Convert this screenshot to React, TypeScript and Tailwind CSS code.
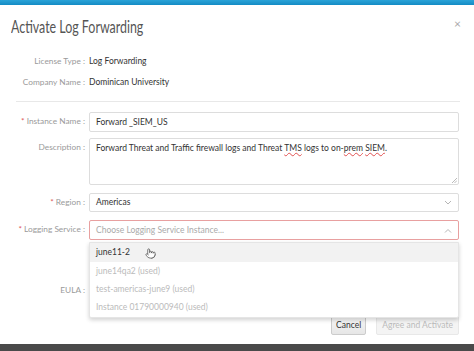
import { Pointer } from "lucide-react";

const font = { fontFamily: "Lato, 'Open Sans', sans-serif" };

function Label({ text, required }: { text: string; required?: boolean }) {
  return (
    <div className="w-[85px] shrink-0 pr-[4px] text-right text-[8.3px] text-[#9a9a9a] leading-[19px] whitespace-nowrap">
      {required && <span className="text-[#e06060] mr-[2px]">*</span>}
      {text} :
    </div>
  );
}

function Chevron({ up }: { up?: boolean }) {
  return (
    <svg width="8" height="5" viewBox="0 0 8 5" className="text-[#b5b5b5]">
      <path d={up ? "M1 4.5 L4 1.5 L7 4.5" : "M1 1 L4 4 L7 1"} fill="none" stroke="currentColor" strokeWidth="1" />
    </svg>
  );
}

export default function App() {
  return (
    <div className="w-[474px] h-[351px] flex flex-col overflow-hidden bg-white" style={font}>
      <div className="h-[5px] shrink-0 bg-gradient-to-b from-[#2aa3d8] to-[#138bc4]" />

      <div className="relative flex-1 flex flex-col pl-[4px] pr-[15px]">
        {/* Header */}
        <div className="flex items-start justify-between mt-[12px]">
          <h1 className="pl-[7px] text-[17px] leading-[20px] text-[#555]">
            <span className="inline-block origin-left scale-x-[0.73] whitespace-nowrap">Activate Log Forwarding</span>
          </h1>
          <span className="mt-[1px] mr-[-2px] text-[12px] leading-[12px] text-[#aaa]">×</span>
        </div>

        <div className="mt-[14px] flex h-[21px] items-center">
          <Label text="License Type" />
          <span className="text-[8.5px] text-[#333]">Log Forwarding</span>
        </div>
        <div className="flex h-[21px] items-center">
          <Label text="Company Name" />
          <span className="text-[8.5px] text-[#333]">Dominican University</span>
        </div>

        <div className="mt-[8px] ml-[12px] mr-[-1px] h-px bg-[#e8e8e8]" />

        {/* Form */}
        <div className="mt-[10px] flex">
          <Label text="Instance Name" required />
          <div className="flex-1 h-[20px] border border-[#ddd] rounded-[2px] px-[6px] text-[8.5px] leading-[18px] text-[#333]">
            Forward _SIEM_US
          </div>
        </div>
        <div className="mt-[6px] flex">
          <Label text="Description" />
          <div className="relative flex-1 h-[47px] border border-[#ddd] rounded-[2px] px-[6px] pt-[1px] text-[8.5px] leading-[16px] text-[#333]">
            Forward Threat and Traffic firewall logs and Threat{" "}
            <span className="underline decoration-wavy decoration-[#e05050] decoration-[1px]">TMS</span> logs to on-
            <span className="underline decoration-wavy decoration-[#e05050] decoration-[1px]">prem</span>{" "}
            <span className="underline decoration-wavy decoration-[#e05050] decoration-[1px]">SIEM</span>.
            <svg width="5" height="5" viewBox="0 0 5 5" className="absolute right-[1px] bottom-[1px]">
              <path d="M5 0 L0 5 M5 2.5 L2.5 5" stroke="#aaa" strokeWidth="0.8" />
            </svg>
          </div>
        </div>
        <div className="mt-[8px] flex">
          <Label text="Region" required />
          <div className="flex-1 h-[19px] border border-[#ddd] rounded-[2px] pl-[6px] pr-[6px] flex items-center justify-between text-[8.5px] text-[#333]">
            <span>Americas</span>
            <Chevron />
          </div>
        </div>
        <div className="mt-[8px] flex">
          <Label text="Logging Service" required />
          <div className="relative flex-1 h-[20px] border border-[#e8a0a0] rounded-[2px] pl-[6px] pr-[6px] flex items-center justify-between text-[8.5px] text-[#aaa]">
            <span>Choose Logging Service Instance...</span>
            <Chevron up />

            {/* Dropdown menu */}
            <div className="absolute left-[-1px] right-[-1px] top-[21px] z-10 bg-white border border-[#e5e5e5] rounded-b-[2px] shadow-[0_2px_4px_rgba(0,0,0,0.18)] text-[8.5px]">
              <div className="h-[19px] leading-[19px] pl-[6px] bg-[#f2f2f2] text-[#333]">june11-2</div>
              <div className="h-[18px] leading-[18px] pl-[6px] text-[#bbb]">june14qa2 (used)</div>
              <div className="h-[18px] leading-[18px] pl-[6px] text-[#bbb]">test-americas-june9 (used)</div>
              <div className="h-[19px] leading-[19px] pl-[6px] text-[#bbb]">Instance 01790000940 (used)</div>
            </div>
            <Pointer className="absolute left-[55px] top-[27px] z-20 text-[#444] fill-white" size={11} strokeWidth={1.6} />
          </div>
        </div>

        <div className="mt-[41px] flex">
          <Label text="EULA" />
        </div>

        {/* Footer buttons */}
        <div className="mt-[16px] flex justify-end gap-[10px]">
          <button className="h-[19px] px-[4px] border border-[#ccc] rounded-[2px] bg-gradient-to-b from-[#f7f7f7] to-[#e6e6e6] text-[8.5px] text-[#333]">
            Cancel
          </button>
          <button className="h-[19px] px-[5px] border border-[#e8e8e8] rounded-[2px] bg-[#f4f4f4] text-[8.5px] text-[#bbb]">
            Agree and Activate
          </button>
        </div>
      </div>

      <div className="h-[7px] shrink-0 bg-[#4a4a4a]" />
    </div>
  );
}
